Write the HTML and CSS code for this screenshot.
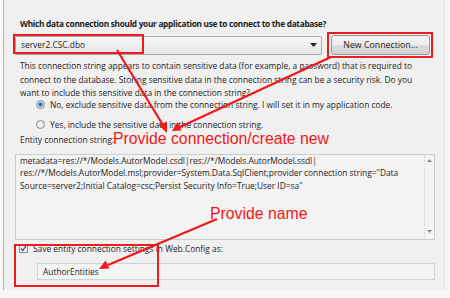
FILE: index.html
```html
<!DOCTYPE html>
<html>
<head>
<meta charset="utf-8">
<link rel="stylesheet" href="styles.css">
</head>
<body>
<div class="page">
  <div class="window">
    <div class="heading">Which data connection should your application use to connect to the database?</div>
    <div class="combo-row">
      <div class="combo">
        <span class="combo-text">server2.CSC.dbo</span>
        <svg class="combo-arrow" width="7" height="4" viewBox="0 0 7 4"><path d="M0 0h7L3.5 4z" fill="#222"/></svg>
      </div>
      <div class="button">New Connection...</div>
    </div>
    <p class="para">This connection string appears to contain sensitive data (for example, a password) that is required to connect to the database. Storing sensitive data in the connection string can be a security risk. Do you want to include this sensitive data in the connection string?</p>
    <div class="option first">
      <span class="radio checked"></span>
      <span>No, exclude sensitive data from the connection string. I will set it in my application code.</span>
    </div>
    <div class="option">
      <span class="radio"></span>
      <span>Yes, include the sensitive data in the connection string.</span>
    </div>
    <div class="label">Entity connection string:</div>
    <div class="textarea">
      <div class="ta-text">metadata=res://*/Models.AutorModel.csdl|res://*/Models.AutorModel.ssdl|<br>res://*/Models.AutorModel.msl;provider=System.Data.SqlClient;provider connection string="Data Source=server2;Initial Catalog=csc;Persist Security Info=True;User ID=sa"</div>
      <div class="scrollbar">
        <svg width="5" height="3" viewBox="0 0 5 3"><path d="M0 3h5L2.5 0z" fill="#888"/></svg>
        <svg width="5" height="3" viewBox="0 0 5 3"><path d="M0 0h5L2.5 3z" fill="#888"/></svg>
      </div>
    </div>
    <div class="check-row">
      <span class="checkbox">
        <svg width="7" height="7" viewBox="0 0 7 7"><path d="M1 3.5l1.8 2L6 0.8" fill="none" stroke="#3a4f8a" stroke-width="1.3"/></svg>
      </span>
      <span>Save entity connection settings in Web.Config as:</span>
    </div>
    <div class="input">AuthorEntities</div>
  </div>

  <div class="mark mark-combo"></div>
  <div class="mark mark-button"></div>
  <div class="mark mark-save"></div>
  <div class="note note-1">Provide connection/create new</div>
  <div class="note note-2">Provide name</div>
  <svg class="arrows" width="450" height="298" viewBox="0 0 450 298">
    <g stroke="#f01818" stroke-width="2.2" fill="none">
      <line x1="117" y1="50" x2="163" y2="125"/>
      <line x1="331" y1="57" x2="180" y2="127"/>
      <line x1="217" y1="219" x2="108" y2="265"/>
    </g>
    <g fill="#f01818">
      <path d="M167 133 L158.5 125 L167 121.5 Z"/>
      <path d="M172 131 L177.5 122 L181.5 130.5 Z"/>
      <path d="M99 269 L105.5 260.5 L109.5 268.5 Z"/>
    </g>
  </svg>
</div>
</body>
</html>
```
FILE: styles.css
```css
* { box-sizing: border-box; }
html, body { margin: 0; padding: 0; }
body {
  width: 450px;
  height: 298px;
  background: #f7f7f7;
  font-family: "Open Sans", "Noto Sans", sans-serif;
  font-size: 8.4px;
  color: #1c1c1c;
  overflow: hidden;
}
.page {
  position: relative;
  width: 450px;
  height: 298px;
}
.window {
  margin-left: 3px;
  width: 442px;
  height: 290px;
  background: #f0f0f0;
  border-left: 1px solid #b4b4b4;
  border-right: 1px dotted #d6dede;
  padding: 17px 0 0 11px;
}
.heading {
  font-weight: 700;
  line-height: 13px;
  padding-left: 5px;
  font-size: 8.3px;
  letter-spacing: -0.3px;
}
.combo-row {
  display: flex;
  align-items: center;
  gap: 9px;
  margin-top: 5px;
}
.combo {
  width: 307px;
  height: 19px;
  border: 1px solid #a9a9a9;
  border-radius: 2px;
  background: linear-gradient(#f7f7f7, #e6e6e6);
  display: flex;
  align-items: center;
  justify-content: space-between;
  padding: 0 4px 0 5px;
}
.combo-text { line-height: 1; }
.button {
  width: 99px;
  height: 20px;
  border: 1px solid #9a9a9a;
  border-radius: 3px;
  background: linear-gradient(#f5f5f5 0%, #ececec 50%, #dcdcdc 51%, #d2d2d2 100%);
  display: flex;
  align-items: center;
  justify-content: center;
  font-size: 8.8px;
}
.para {
  margin: 4px 0 0 0;
  padding-left: 5px;
  width: 405px;
  line-height: 13.5px;
}
.option {
  display: flex;
  align-items: center;
  gap: 5px;
  height: 20px;
  padding-left: 21px;
}
.option.first { margin-top: -5px; }
.radio {
  width: 9px;
  height: 9px;
  border-radius: 50%;
  border: 1px solid #8c8c8c;
  background: radial-gradient(circle, #fdfdfd 0%, #dcdcdc 100%);
  display: inline-block;
}
.radio.checked {
  background: radial-gradient(circle, #2b6fb8 0, #3d7dc4 1.8px, #cfdff0 2.6px, #e6e6e6 100%);
}
.label {
  padding-left: 5px;
  line-height: 13px;
  margin-top: -2px;
}
.textarea {
  margin-top: 8px;
  width: 420px;
  height: 86px;
  border: 1px solid #c9cfcf;
  background: #f3f3f3;
  display: flex;
  justify-content: space-between;
}
.ta-text {
  padding: 0 0 0 4px;
  line-height: 12.8px;
  width: 400px;
}
.scrollbar {
  width: 10px;
  border-left: 1px dotted #cad3d3;
  display: flex;
  flex-direction: column;
  justify-content: space-between;
  align-items: center;
  padding: 4px 0 6px;
}
.check-row {
  display: flex;
  align-items: center;
  gap: 5px;
  height: 13px;
  margin-top: 2px;
  padding-left: 4px;
}
.checkbox {
  width: 9px;
  height: 9px;
  border: 1px solid #8e8e8e;
  background: linear-gradient(#eaeaea, #fafafa);
  display: flex;
  align-items: center;
  justify-content: center;
}
.input {
  margin: 8px 0 0 22px;
  width: 398px;
  height: 17px;
  border: 1px solid #cdd4d4;
  background: #f4f4f4;
  padding-left: 5px;
  line-height: 15px;
}
.mark {
  position: absolute;
  border: 2.5px solid #ee1c1c;
}
.mark-combo { left: 13px; top: 34px; width: 131px; height: 20px; }
.mark-button { left: 327px; top: 32px; width: 106px; height: 26px; }
.mark-save { left: 14px; top: 244px; width: 145px; height: 43px; }
.note {
  position: absolute;
  color: #f01818;
  font-family: "Liberation Sans", Arial, sans-serif;
  font-size: 16px;
  line-height: 18px;
  white-space: nowrap;
}
.note-1 { left: 113px; top: 130px; font-size: 15.8px; }
.note-2 { left: 210px; top: 205px; font-size: 15.8px; }
.arrows {
  position: absolute;
  left: 0;
  top: 0;
}
```
